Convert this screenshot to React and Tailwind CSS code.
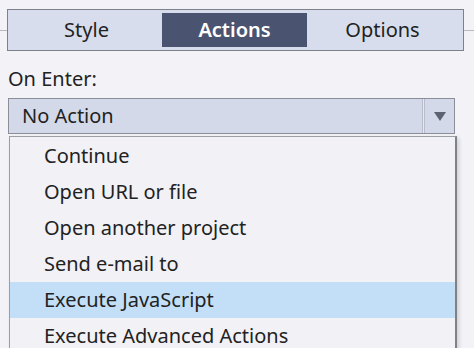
import React from "react";

const items = [
  "Continue",
  "Open URL or file",
  "Open another project",
  "Send e-mail to",
  "Execute JavaScript",
  "Execute Advanced Actions",
];

function App() {
  return (
    <div
      className="w-[474px] h-[348px] overflow-hidden bg-[#f3f3f7] text-[#222] text-[20px]"
      style={{ fontFamily: '"Noto Sans", "Open Sans", sans-serif' }}
    >
      {/* tab bar */}
      <div className="flex items-center pt-[9px]">
        <div className="w-[7px] h-px bg-[#b8bac2]" />
        <div className="grid grid-cols-[151px_145px_151px] w-[457px] h-[42px] border border-[#7d818c] bg-[#d7ddec] p-[3px]">
          <div className="flex items-center justify-center">Style</div>
          <div className="flex items-center justify-center bg-[#4a5471] text-white font-semibold">
            Actions
          </div>
          <div className="flex items-center justify-center">Options</div>
        </div>
        <div className="flex-1 h-px bg-[#b8bac2]" />
      </div>

      <div className="pl-[8px] mt-[16px] leading-[24px]">On Enter:</div>

      {/* select */}
      <div className="ml-[8px] mt-[7px] w-[447px] h-[36px] border border-[#8a8e98] bg-[#d3d9e8] flex items-center">
        <div className="flex-1 pl-[13px]">No Action</div>
        <div className="w-[3px] h-[34px] border-x border-[#b8bdc9] bg-[#e6e9f1]" />
        <div className="w-[29px] flex items-center justify-center">
          <svg width="12" height="9" viewBox="0 0 12 9">
            <path d="M0 0 L12 0 L6 9 Z" fill="#5d6270" />
          </svg>
        </div>
      </div>

      {/* menu */}
      <div className="ml-[9px] mt-[2px] w-[448px] h-[300px] border border-[#9c9ea6] border-r-[2px] border-r-[#7f8189] bg-[#f1f1f6] shadow-[2px_2px_4px_rgba(0,0,0,0.15)] pt-px">
        {items.map((item, i) => (
          <div
            key={i}
            className={
              "h-[36px] flex items-center pl-[34px] " +
              (i === 4 ? "bg-[#c3dff8]" : "")
            }
          >
            {item}
          </div>
        ))}
      </div>
    </div>
  );
}

export default App;
